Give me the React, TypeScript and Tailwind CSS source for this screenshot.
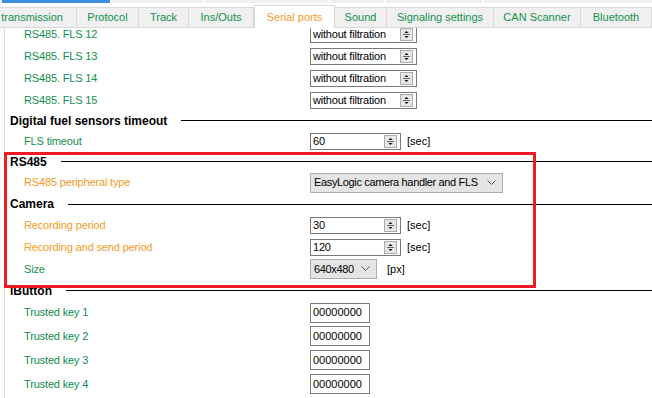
import React from "react";

const GREEN = "text-[#10904c]";
const ORANGE = "text-[#f39a26]";

const tabs = [
  { name: "transmission", w: "w-[77px]", cut: true },
  { name: "Protocol", w: "w-[62px]" },
  { name: "Track", w: "w-[50px]" },
  { name: "Ins/Outs", w: "w-[65px]" },
  { name: "Serial ports", w: "w-[81px]", active: true },
  { name: "Sound", w: "w-[52px]" },
  { name: "Signaling settings", w: "w-[107px]" },
  { name: "CAN Scanner", w: "w-[87px]" },
  { name: "Bluetooth", w: "w-[71px]" },
];

function SpinArrows() {
  return (
    <div className="w-[13px] h-[13px] border border-[#acacac] bg-[#e6e6e6] flex items-center justify-center">
      <svg width="9" height="11" viewBox="0 0 9 11">
        <path d="M4.5 2 L6.5 4 L2.5 4 Z" fill="#000" />
        <line x1="1" y1="5.5" x2="8" y2="5.5" stroke="#666" strokeWidth="1" />
        <path d="M2.5 7 L6.5 7 L4.5 9 Z" fill="#000" />
      </svg>
    </div>
  );
}

function Spin({ value, w }: { value: string; w: string }) {
  return (
    <div className={`${w} h-[17px] border border-[#7a7a7a] bg-white flex items-center`}>
      <span className="flex-1 pl-[2px] leading-none text-black whitespace-nowrap tracking-[-0.2px]">{value}</span>
      <div className="mr-[3px]">
        <SpinArrows />
      </div>
    </div>
  );
}

function Combo({ value, w }: { value: string; w: string }) {
  return (
    <div className={`${w} h-[20px] border border-[#adadad] bg-[#e5e5e5] flex items-center`}>
      <span className="flex-1 pl-[3px] text-black whitespace-nowrap tracking-[-0.35px]">{value}</span>
      <svg width="9" height="6" viewBox="0 0 9 6" className="mr-[6px] ml-[4px] shrink-0">
        <path d="M0.5 0.5 L4.5 4.5 L8.5 0.5" fill="none" stroke="#555" strokeWidth="1" />
      </svg>
    </div>
  );
}

function TextBox({ value }: { value: string }) {
  return (
    <div className="w-[60px] h-[20px] border border-[#7a7a7a] bg-white flex items-center">
      <span className="pl-[2px] text-black">{value}</span>
    </div>
  );
}

function Row({
  label,
  color = GREEN,
  h = "h-[22px]",
  children,
}: {
  label: string;
  color?: string;
  h?: string;
  children: React.ReactNode;
}) {
  return (
    <div className={`flex items-center ${h}`}>
      <div className={`w-[305px] pl-[19px] tracking-[-0.15px] ${color}`}>{label}</div>
      <div className="flex items-center">{children}</div>
    </div>
  );
}

function Header({ title, h = "h-[19px]" }: { title: string; h?: string }) {
  return (
    <div className={`flex items-center ${h} pl-[5px]`}>
      <span className="font-bold text-[12px] text-black">{title}</span>
      <div className="flex-1 h-px bg-black ml-[14px]" />
    </div>
  );
}

export default function App() {
  return (
    <div className="relative w-[652px] h-[398px] overflow-hidden bg-white font-['Liberation_Sans',Arial,sans-serif] text-[11px]">
      {/* window strip */}
      <div className="flex h-[3px] bg-[#f0f0f0]">
        <div className="ml-[2px] w-[108px] bg-[#3d8ee4]" />
        <div className="w-[93px] border-l-2 border-white" />
        <div className="w-[125px] border-l-2 border-white" />
        <div className="w-[56px] border-l-2 border-white" />
        <div className="w-[98px] border-l-2 border-white" />
        <div className="flex-1 border-l-2 border-white" />
      </div>

      {/* tabs */}
      <div className="flex items-end h-[25px] border-b border-[#d9d9d9]">
        {tabs.map((t) =>
          t.active ? (
            <div
              key={t.name}
              className={`${t.w} h-[23px] -mb-px bg-white border border-b-0 border-[#d9d9d9] flex items-center justify-center ${ORANGE}`}
            >
              {t.name}
            </div>
          ) : (
            <div
              key={t.name}
              className={`${t.w} h-[20px] bg-[#f0f0f0] border-t border-r border-[#d9d9d9] flex items-center ${
                t.cut ? "justify-end pr-[13px]" : "justify-center"
              } ${GREEN}`}
            >
              {t.name}
            </div>
          )
        )}
      </div>

      {/* content */}
      <div className="ml-[4px] border-l border-[#d9d9d9] h-[370px] overflow-hidden">
        <div className="-mt-[5px]">
          <Row label="RS485. FLS 12">
            <Spin value="without filtration" w="w-[107px]" />
          </Row>
          <Row label="RS485. FLS 13">
            <Spin value="without filtration" w="w-[107px]" />
          </Row>
          <Row label="RS485. FLS 14">
            <Spin value="without filtration" w="w-[107px]" />
          </Row>
          <Row label="RS485. FLS 15">
            <Spin value="without filtration" w="w-[107px]" />
          </Row>

          <Header title="Digital fuel sensors timeout" />
          <Row label="FLS timeout">
            <Spin value="60" w="w-[91px]" />
            <span className="ml-[6px] text-black">[sec]</span>
          </Row>

          <Header title="RS485" />
          <Row label="RS485 peripheral type" color={ORANGE} h="h-[23px]">
            <Combo value="EasyLogic camera handler and FLS" w="w-[193px]" />
          </Row>

          <Header title="Camera" h="h-[20px]" />
          <Row label="Recording period" color={ORANGE}>
            <Spin value="30" w="w-[91px]" />
            <span className="ml-[6px] text-black">[sec]</span>
          </Row>
          <Row label="Recording and send period" color={ORANGE}>
            <Spin value="120" w="w-[91px]" />
            <span className="ml-[6px] text-black">[sec]</span>
          </Row>
          <Row label="Size">
            <Combo value="640x480" w="w-[67px]" />
            <span className="ml-[10px] text-black">[px]</span>
          </Row>

          <Header title="iButton" h="h-[21px]" />
          <Row label="Trusted key 1" h="h-[23px]">
            <TextBox value="00000000" />
          </Row>
          <Row label="Trusted key 2" h="h-[24px]">
            <TextBox value="00000000" />
          </Row>
          <Row label="Trusted key 3" h="h-[24px]">
            <TextBox value="00000000" />
          </Row>
          <Row label="Trusted key 4" h="h-[24px]">
            <TextBox value="00000000" />
          </Row>
        </div>
      </div>

      {/* highlight */}
      <div className="absolute left-[4px] top-[152px] w-[532px] h-[136px] border-[3px] border-[#ed1c24] pointer-events-none" />
    </div>
  );
}
